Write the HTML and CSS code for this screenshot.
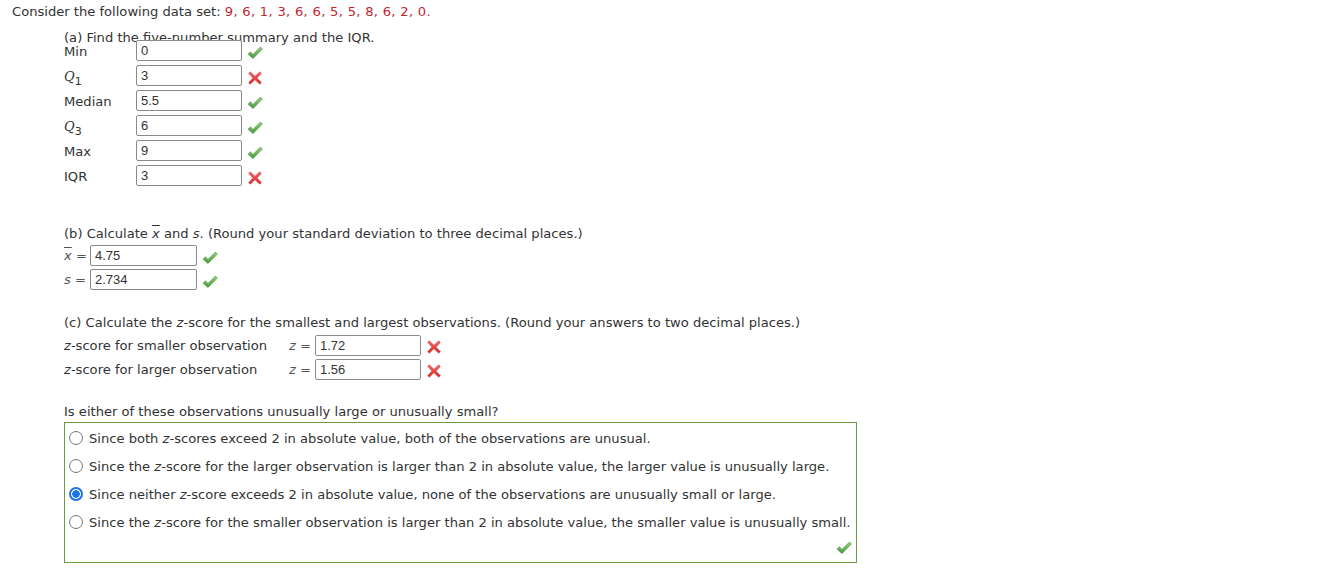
FILE: index.html
```html
<!DOCTYPE html>
<html lang="en">
<head>
    <meta charset="UTF-8">
    <title>Five-number summary</title>
    <link rel="stylesheet" href="styles.css">
</head>
<body>
    <svg width="0" height="0" class="defs">
        <defs>
            <linearGradient id="gGreen" x1="0" y1="0" x2="0" y2="1">
                <stop offset="0" stop-color="#9ad37f"/>
                <stop offset="1" stop-color="#3f9a3a"/>
            </linearGradient>
            <linearGradient id="gRed" x1="0" y1="0" x2="0" y2="1">
                <stop offset="0" stop-color="#f26b6b"/>
                <stop offset="1" stop-color="#d9262b"/>
            </linearGradient>
            <symbol id="ok" viewBox="0 0 16 14">
                <path d="M1 8.2 L3.4 5.8 L6 8.4 L13.4 1 L15.4 3 L6 12.6 Z" fill="url(#gGreen)" stroke="#4c8f3c" stroke-width="0.6" stroke-linejoin="round"/>
            </symbol>
            <symbol id="bad" viewBox="0 0 14 14">
                <path d="M2.2 0.8 L7 5.2 L11.8 0.8 L13.4 2.4 L9 7 L13.4 11.6 L11.8 13.2 L7 8.8 L2.2 13.2 L0.6 11.6 L5 7 L0.6 2.4 Z" fill="url(#gRed)" stroke="#d23a3d" stroke-width="0.5" stroke-linejoin="round"/>
            </symbol>
        </defs>
    </svg>

    <p class="intro">Consider the following data set: <span class="data">9, 6, 1, 3, 6, 6, 5, 5, 8, 6, 2, 0.</span></p>

    <div class="part part-a">
        <div class="part-title">(a) Find the five-number summary and the IQR.</div>
        <div class="summary">
            <div class="lbl">Min</div>
            <div class="box">0</div>
            <svg class="mark ok"><use href="#ok"/></svg>

            <div class="lbl q"><i>Q</i><sub>1</sub></div>
            <div class="box">3</div>
            <svg class="mark bad"><use href="#bad"/></svg>

            <div class="lbl">Median</div>
            <div class="box">5.5</div>
            <svg class="mark ok"><use href="#ok"/></svg>

            <div class="lbl q"><i>Q</i><sub>3</sub></div>
            <div class="box">6</div>
            <svg class="mark ok"><use href="#ok"/></svg>

            <div class="lbl">Max</div>
            <div class="box">9</div>
            <svg class="mark ok"><use href="#ok"/></svg>

            <div class="lbl">IQR</div>
            <div class="box">3</div>
            <svg class="mark bad"><use href="#bad"/></svg>
        </div>
    </div>

    <div class="part part-b">
        <div class="part-title">(b) Calculate <i class="xbar">x</i> and <i>s</i>. (Round your standard deviation to three decimal places.)</div>
        <div class="stats">
            <div class="lbl eq"><i class="xbar">x</i> =</div>
            <div class="box">4.75</div>
            <svg class="mark ok"><use href="#ok"/></svg>

            <div class="lbl eq"><i>s</i> =</div>
            <div class="box">2.734</div>
            <svg class="mark ok"><use href="#ok"/></svg>
        </div>
    </div>

    <div class="part part-c">
        <div class="part-title">(c) Calculate the <i>z</i>-score for the smallest and largest observations. (Round your answers to two decimal places.)</div>
        <div class="zscores">
            <div class="lbl"><i>z</i>-score for smaller observation</div>
            <div class="lbl eq"><i>z</i> =</div>
            <div class="box">1.72</div>
            <svg class="mark bad"><use href="#bad"/></svg>

            <div class="lbl"><i>z</i>-score for larger observation</div>
            <div class="lbl eq"><i>z</i> =</div>
            <div class="box">1.56</div>
            <svg class="mark bad"><use href="#bad"/></svg>
        </div>
    </div>

    <div class="part part-d">
        <div class="question">Is either of these observations unusually large or unusually small?</div>
        <div class="choices">
            <div class="choice"><span class="radio"></span><span>Since both <i>z</i>-scores exceed 2 in absolute value, both of the observations are unusual.</span></div>
            <div class="choice"><span class="radio"></span><span>Since the <i>z</i>-score for the larger observation is larger than 2 in absolute value, the larger value is unusually large.</span></div>
            <div class="choice"><span class="radio on"></span><span>Since neither <i>z</i>-score exceeds 2 in absolute value, none of the observations are unusually small or large.</span></div>
            <div class="choice"><span class="radio"></span><span>Since the <i>z</i>-score for the smaller observation is larger than 2 in absolute value, the smaller value is unusually small.</span></div>
            <svg class="mark ok final"><use href="#ok"/></svg>
        </div>
    </div>
</body>
</html>
```

FILE: styles.css
```css
body {
    margin: 0;
    padding: 3px 12px;
    background: #fff;
    color: #333;
    font-family: "DejaVu Sans", Verdana, sans-serif;
    font-size: 13.1px;
}
.defs {
    position: absolute;
}
.intro {
    margin: 0;
    line-height: 18px;
}
.data {
    color: #c4262e;
    letter-spacing: 0.3px;
}
.part {
    margin-left: 52px;
}
.part-title {
    line-height: 18px;
}
.part-a {
    margin-top: 8px;
}
.part-a .part-title {
    margin-bottom: -7px;
}
.summary {
    display: grid;
    grid-template-columns: 72px 106px 24px;
    grid-auto-rows: 21px;
    row-gap: 4px;
    align-items: center;
}
.lbl {
    white-space: nowrap;
}
.summary .lbl {
    padding-top: 2px;
}
.q {
    font-size: 13px;
}
.q i {
    font-family: "DejaVu Serif", serif;
}
.q sub {
    font-size: 11px;
    vertical-align: -4px;
    line-height: 0;
}
.box {
    position: relative;
    box-sizing: border-box;
    height: 21px;
    border: 1px solid #8a8a8a;
    border-radius: 2px;
    padding: 1px 4px;
    font-family: "Liberation Sans", Arial, sans-serif;
    font-size: 13px;
    line-height: 17px;
    color: #333;
    background: #fff;
}
.mark {
    width: 16px;
    height: 14px;
    margin-left: 5px;
    margin-top: 4px;
}
.mark.bad {
    width: 14px;
    height: 14px;
    margin-left: 6px;
}
.part-b {
    margin-top: 39px;
}
.stats {
    display: grid;
    grid-template-columns: 26px 107px 24px;
    grid-auto-rows: 21px;
    row-gap: 3px;
    align-items: center;
    margin-top: 2px;
}
.eq {
    color: #555;
}
.xbar {
    text-decoration: overline;
}
.part-c {
    margin-top: 24px;
}
.zscores {
    display: grid;
    grid-template-columns: 225px 26px 106px 24px;
    grid-auto-rows: 22px;
    row-gap: 2px;
    align-items: center;
    margin-top: 2px;
}
.part-d {
    margin-top: 23px;
    width: 793px;
}
.question {
    line-height: 18px;
}
.choices {
    border: 1px solid #6b9a3f;
    margin-top: 1px;
    padding: 1px 0 7px 4px;
}
.choice {
    display: flex;
    align-items: center;
    height: 28px;
    white-space: nowrap;
}
.radio {
    box-sizing: border-box;
    width: 14px;
    height: 14px;
    border: 1px solid #777;
    border-radius: 50%;
    margin-right: 6px;
    flex: none;
    background: #fff;
}
.radio.on {
    border: 2px solid #1a73e8;
    background: radial-gradient(circle, #1a73e8 0 3.5px, #fff 4px);
}
.final {
    display: block;
    margin: 5px 4px 0 auto;
}
```
